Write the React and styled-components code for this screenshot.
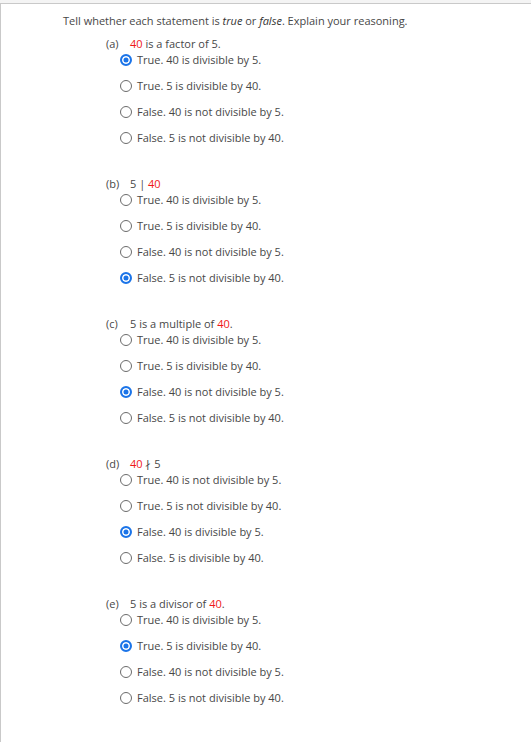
import React from "react";
import styled, { createGlobalStyle } from "styled-components";

const GlobalStyle = createGlobalStyle`
  html, body {
    margin: 0;
    padding: 0;
    background: #f4f4f4;
  }
  body {
    font-family: "Open Sans", "Liberation Sans", sans-serif;
  }
`;

const Page = styled.div`
  margin-top: 3px;
  min-height: 739px;
  background: #fff;
  border-top: 1px solid #c9c9c9;
  border-left: 1px solid #c9c9c9;
  box-sizing: border-box;
  padding: 9px 0 0 62px;
  color: #474747;
  font-size: 11px;
`;

const Prompt = styled.div`
  line-height: 16px;
  margin-bottom: 7px;
`;

const Em = styled.em`
  color: #333;
`;

const Part = styled.div`
  padding-left: 43px;
  height: 140px;
`;

const PartTitle = styled.div`
  display: flex;
  line-height: 16px;
`;

const Letter = styled.span`
  width: 24px;
`;

const Red = styled.span`
  color: #f01818;
`;

const Options = styled.div`
  display: flex;
  flex-direction: column;
  gap: 10px;
  padding-left: 14px;
`;

const Option = styled.label`
  display: flex;
  align-items: center;
  gap: 5px;
  line-height: 16px;
`;

const Radio = styled.span`
  width: 12px;
  height: 12px;
  border-radius: 50%;
  box-sizing: border-box;
  border: ${(p) => (p.checked ? "2px solid #1b74e8" : "1px solid #6b6b6b")};
  background: ${(p) => (p.checked ? "#1b74e8" : "#fff")};
  box-shadow: ${(p) => (p.checked ? "inset 0 0 0 1.5px #fff" : "none")};
  flex-shrink: 0;
`;

const parts = [
  {
    letter: "(a)",
    title: (
      <>
        <Red>40</Red>&nbsp;is a factor of 5.
      </>
    ),
    options: [
      "True. 40 is divisible by 5.",
      "True. 5 is divisible by 40.",
      "False. 40 is not divisible by 5.",
      "False. 5 is not divisible by 40.",
    ],
    picked: 0,
  },
  {
    letter: "(b)",
    title: (
      <>
        5 |&nbsp;<Red>40</Red>
      </>
    ),
    options: [
      "True. 40 is divisible by 5.",
      "True. 5 is divisible by 40.",
      "False. 40 is not divisible by 5.",
      "False. 5 is not divisible by 40.",
    ],
    picked: 3,
  },
  {
    letter: "(c)",
    title: (
      <>
        5 is a multiple of&nbsp;<Red>40</Red>.
      </>
    ),
    options: [
      "True. 40 is divisible by 5.",
      "True. 5 is divisible by 40.",
      "False. 40 is not divisible by 5.",
      "False. 5 is not divisible by 40.",
    ],
    picked: 2,
  },
  {
    letter: "(d)",
    title: (
      <>
        <Red>40</Red>&nbsp;∤ 5
      </>
    ),
    options: [
      "True. 40 is not divisible by 5.",
      "True. 5 is not divisible by 40.",
      "False. 40 is divisible by 5.",
      "False. 5 is divisible by 40.",
    ],
    picked: 2,
  },
  {
    letter: "(e)",
    title: (
      <>
        5 is a divisor of&nbsp;<Red>40</Red>.
      </>
    ),
    options: [
      "True. 40 is divisible by 5.",
      "True. 5 is divisible by 40.",
      "False. 40 is not divisible by 5.",
      "False. 5 is not divisible by 40.",
    ],
    picked: 1,
  },
];

export default function App() {
  return (
    <>
      <GlobalStyle />
      <Page>
        <Prompt>
          Tell whether each statement is <Em>true</Em> or <Em>false</Em>. Explain your reasoning.
        </Prompt>
        {parts.map((part) => (
          <Part key={part.letter}>
            <PartTitle>
              <Letter>{part.letter}</Letter>
              <span>{part.title}</span>
            </PartTitle>
            <Options>
              {part.options.map((text, i) => (
                <Option key={text}>
                  <Radio checked={i === part.picked} />
                  {text}
                </Option>
              ))}
            </Options>
          </Part>
        ))}
      </Page>
    </>
  );
}
